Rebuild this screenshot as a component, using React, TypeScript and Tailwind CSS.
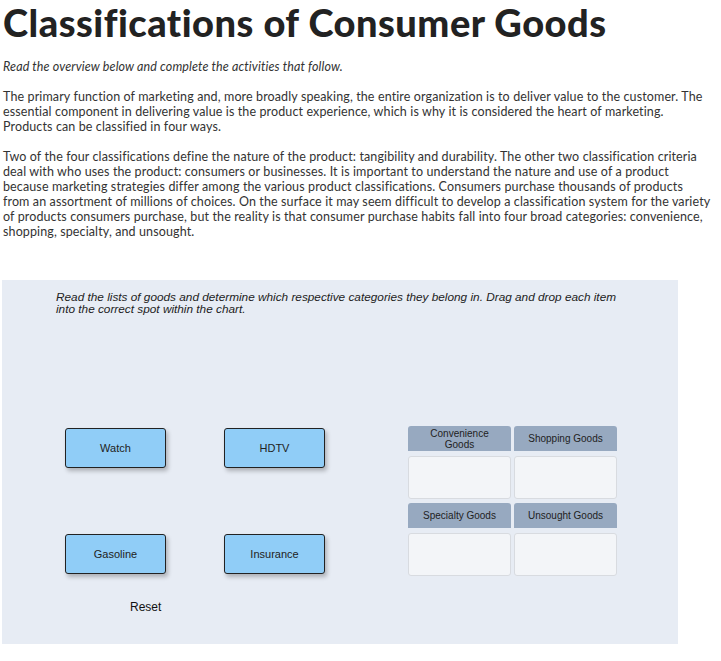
import React from 'react';

const items = ['Watch', 'HDTV', 'Gasoline', 'Insurance'];

function Item({ label }: { label: string }) {
  return (
    <div className="w-[101px] h-[40px] flex items-center justify-center rounded-[3px] border border-[#222] bg-[#90cdf7] shadow-[2px_3px_4px_rgba(0,0,0,0.25)] text-[11px] text-[#222] font-['Liberation_Sans',Arial,sans-serif]">
      {label}
    </div>
  );
}

function Header({ children }: { children: React.ReactNode }) {
  return (
    <div className="h-[25px] flex items-center justify-center text-center leading-[11px] rounded-t-[3px] bg-[#97a9c0] text-[10px] text-[#222] font-['Liberation_Sans',Arial,sans-serif]">
      {children}
    </div>
  );
}

function Cell() {
  return <div className="h-[43px] rounded-[3px] border border-[#d8dbe0] bg-[#f3f5f8]" />;
}

export default function App() {
  return (
    <div className="bg-white font-['Lato',sans-serif] text-[#333]">
      <h1 className="px-[3px] text-[38px] leading-[44px] font-black text-[#222] tracking-[0.5px]">
        Classifications of Consumer Goods
      </h1>
      <div className="ml-[3px] w-[708px] text-[12.5px] leading-[15px] tracking-[0.12px]">
        <p className="mt-[15px] italic">Read the overview below and complete the activities that follow.</p>
        <p className="mt-[15px]">
          The primary function of marketing and, more broadly speaking, the entire organization is to deliver value to the customer. The essential component in delivering value is the product experience, which is why it is considered the heart of marketing. Products can be classified in four ways.
        </p>
        <p className="mt-[15px]">
          Two of the four classifications define the nature of the product: tangibility and durability. The other two classification criteria deal with who uses the product: consumers or businesses. It is important to understand the nature and use of a product because marketing strategies differ among the various product classifications. Consumers purchase thousands of products from an assortment of millions of choices. On the surface it may seem difficult to develop a classification system for the variety of products consumers purchase, but the reality is that consumer purchase habits fall into four broad categories: convenience, shopping, specialty, and unsought.
        </p>
      </div>

      <div className="mt-[41px] ml-[2px] w-[676px] h-[364px] bg-[#e7ecf4] pt-[11px] pl-[54px] font-['Liberation_Sans',Arial,sans-serif]">
        <p className="italic text-[11.8px] leading-[12px] text-[#222] w-[562px]">
          Read the lists of goods and determine which respective categories they belong in. Drag and drop each item into the correct spot within the chart.
        </p>
        <div className="flex items-start mt-[111px]">
          <div className="ml-[9px] flex flex-col">
            <div className="grid grid-cols-[101px_101px] gap-x-[58px] gap-y-[66px] mt-[2px]">
              {items.map((i) => (
                <Item key={i} label={i} />
              ))}
            </div>
            <div className="mt-[24px] ml-[65px] text-[12px] text-[#111]">Reset</div>
          </div>
          <div className="ml-[83px] w-[209px] grid grid-cols-2 gap-x-[3px] content-start">
            <Header>
              Convenience
              <br />
              Goods
            </Header>
            <Header>Shopping Goods</Header>
            <div className="mt-[5px]"><Cell /></div>
            <div className="mt-[5px]"><Cell /></div>
            <div className="mt-[4px]"><Header>Specialty Goods</Header></div>
            <div className="mt-[4px]"><Header>Unsought Goods</Header></div>
            <div className="mt-[5px]"><Cell /></div>
            <div className="mt-[5px]"><Cell /></div>
          </div>
        </div>
      </div>
    </div>
  );
}
